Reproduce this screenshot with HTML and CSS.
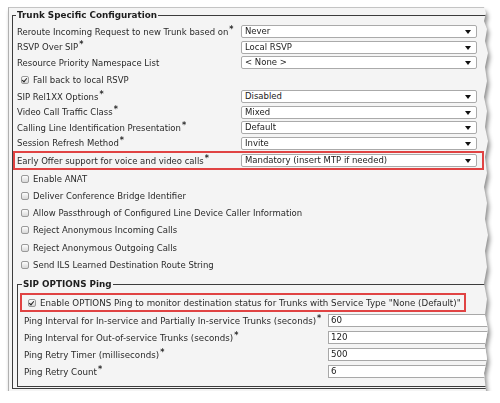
FILE: index.html
```html
<!DOCTYPE html>
<html lang="en">
<head>
    <meta charset="UTF-8">
    <title>Trunk Specific Configuration</title>
    <link rel="stylesheet" href="styles.css">
</head>
<body>
    <div class="sheet">
        <div class="paper">
            <fieldset class="group">
                <legend>Trunk Specific Configuration</legend>

                <div class="row">
                    <span class="label">Reroute Incoming Request to new Trunk based on<sup>*</sup></span>
                    <span class="select">Never</span>
                </div>
                <div class="row">
                    <span class="label">RSVP Over SIP<sup>*</sup></span>
                    <span class="select">Local RSVP</span>
                </div>
                <div class="row">
                    <span class="label">Resource Priority Namespace List</span>
                    <span class="select">&lt; None &gt;</span>
                </div>
                <div class="row check-row first-check">
                    <span class="box checked"></span>
                    <span>Fall back to local RSVP</span>
                </div>
                <div class="row">
                    <span class="label">SIP Rel1XX Options<sup>*</sup></span>
                    <span class="select">Disabled</span>
                </div>
                <div class="row">
                    <span class="label">Video Call Traffic Class<sup>*</sup></span>
                    <span class="select">Mixed</span>
                </div>
                <div class="row">
                    <span class="label">Calling Line Identification Presentation<sup>*</sup></span>
                    <span class="select">Default</span>
                </div>
                <div class="row">
                    <span class="label">Session Refresh Method<sup>*</sup></span>
                    <span class="select">Invite</span>
                </div>
                <div class="row highlight">
                    <span class="label">Early Offer support for voice and video calls<sup>*</sup></span>
                    <span class="select">Mandatory (insert MTP if needed)</span>
                </div>

                <div class="row check-row"><span class="box"></span><span>Enable ANAT</span></div>
                <div class="row check-row"><span class="box"></span><span>Deliver Conference Bridge Identifier</span></div>
                <div class="row check-row"><span class="box"></span><span>Allow Passthrough of Configured Line Device Caller Information</span></div>
                <div class="row check-row"><span class="box"></span><span>Reject Anonymous Incoming Calls</span></div>
                <div class="row check-row"><span class="box"></span><span>Reject Anonymous Outgoing Calls</span></div>
                <div class="row check-row"><span class="box"></span><span>Send ILS Learned Destination Route String</span></div>

                <fieldset class="group inner">
                    <legend>SIP OPTIONS Ping</legend>
                    <div class="row check-row highlight ping-check">
                        <span class="box checked"></span>
                        <span>Enable OPTIONS Ping to monitor destination status for Trunks with Service Type "None (Default)"</span>
                    </div>
                    <div class="row ping-row">
                        <span class="ping-label">Ping Interval for In-service and Partially In-service Trunks (seconds)<sup>*</sup></span>
                        <span class="field">60</span>
                    </div>
                    <div class="row ping-row">
                        <span class="ping-label">Ping Interval for Out-of-service Trunks (seconds)<sup>*</sup></span>
                        <span class="field">120</span>
                    </div>
                    <div class="row ping-row">
                        <span class="ping-label">Ping Retry Timer (milliseconds)<sup>*</sup></span>
                        <span class="field">500</span>
                    </div>
                    <div class="row ping-row">
                        <span class="ping-label">Ping Retry Count<sup>*</sup></span>
                        <span class="field">6</span>
                    </div>
                </fieldset>
            </fieldset>
        </div>
    </div>
</body>
</html>
```

FILE: styles.css
```css
body {
    margin: 0;
    padding: 7px 0 0 8px;
    background: #fff;
    font-family: "DejaVu Sans", Verdana, sans-serif;
    font-size: 8.5px;
    color: #2a2a2a;
    white-space: nowrap;
}

.sheet {
    width: 484px;
    filter: drop-shadow(2px 4px 2px rgba(0, 0, 0, 0.45));
}

.paper {
    height: 383px;
    background: #f4f4f4;
    border-top: 1px solid #c4c4c4;
    border-left: 1px solid #b0b0b0;
    overflow: hidden;
    clip-path: polygon(0 0, 476px 0, 478px 6px, 476px 14px, 479px 22px, 477px 34px, 480px 46px, 477px 60px, 479px 74px, 476px 90px, 479px 104px, 477px 120px, 480px 134px, 477px 150px, 479px 166px, 476px 180px, 479px 196px, 477px 212px, 480px 228px, 477px 244px, 479px 260px, 476px 276px, 479px 292px, 477px 308px, 480px 322px, 477px 338px, 479px 352px, 476px 366px, 478px 384px, 0 384px);
}

.group {
    margin: 2px 0 0 3px;
    padding: 3px 0 1px 4px;
    width: 500px;
    border: 1px solid #3c3c3c;
    border-right: 0;
}

.group legend {
    padding: 0 1px;
    margin-left: -1px;
    font-weight: bold;
    font-size: 8.8px;
    line-height: 11px;
    color: #1e1e1e;
}

.row {
    display: flex;
    align-items: center;
    height: 15.6px;
}

.label {
    width: 224px;
    flex-shrink: 0;
}

sup {
    font-size: 8px;
    font-weight: bold;
    line-height: 0;
    vertical-align: 3px;
    margin-left: 1px;
}

.select {
    position: relative;
    box-sizing: border-box;
    width: 236px;
    height: 13px;
    line-height: 11px;
    padding-left: 3px;
    background: #fff;
    border: 1px solid #aaa;
    border-radius: 2px;
    color: #222;
}

.select::after {
    content: "";
    position: absolute;
    right: 5px;
    top: 4px;
    border-left: 3px solid transparent;
    border-right: 3px solid transparent;
    border-top: 4px solid #111;
}

.check-row {
    height: 17.2px;
    padding-left: 4px;
}

.first-check {
    height: 18px;
}

.box {
    box-sizing: border-box;
    width: 8px;
    height: 8px;
    margin-right: 4px;
    border: 1px solid #9a9a9a;
    border-radius: 2px;
    background: linear-gradient(#fdfdfd, #d8d8d8);
    flex-shrink: 0;
    position: relative;
}

.box.checked::after {
    content: "";
    position: absolute;
    left: 1px;
    top: 0;
    width: 2px;
    height: 4px;
    border-right: 1.5px solid #222;
    border-bottom: 1.5px solid #222;
    transform: rotate(40deg);
}

.highlight {
    box-sizing: border-box;
    height: 19px;
    width: 471px;
    margin-left: -4px;
    padding-left: 2px;
    border: 2px solid #e04343;
}

.inner {
    margin: 6px 0 0 0;
    padding: 3px 0 0 1px;
    height: 103px;
    font-size: 8.7px;
}

.inner legend {
    margin-left: 3px;
}

.ping-check {
    width: 446px;
    height: 19px;
    margin-left: 1px;
    padding-left: 6px;
}

.ping-row {
    height: 17px;
    padding-left: 5px;
}

.ping-label {
    width: 304px;
    flex-shrink: 0;
}

.field {
    box-sizing: border-box;
    width: 170px;
    height: 13px;
    line-height: 11px;
    padding-left: 2px;
    background: #fff;
    border: 1px solid #a8a8a8;
    color: #222;
}
```
